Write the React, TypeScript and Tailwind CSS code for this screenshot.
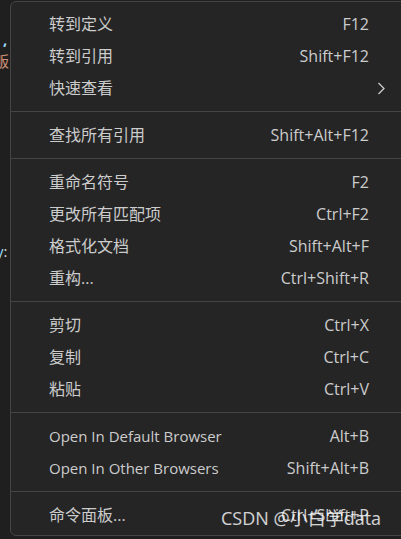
const sections = [
  [
    { label: "转到定义", key: "F12" },
    { label: "转到引用", key: "Shift+F12" },
    { label: "快速查看", key: "", sub: true },
  ],
  [{ label: "查找所有引用", key: "Shift+Alt+F12" }],
  [
    { label: "重命名符号", key: "F2" },
    { label: "更改所有匹配项", key: "Ctrl+F2" },
    { label: "格式化文档", key: "Shift+Alt+F" },
    { label: "重构...", key: "Ctrl+Shift+R" },
  ],
  [
    { label: "剪切", key: "Ctrl+X" },
    { label: "复制", key: "Ctrl+C" },
    { label: "粘贴", key: "Ctrl+V" },
  ],
  [
    { label: "Open In Default Browser", key: "Alt+B", latin: true },
    { label: "Open In Other Browsers", key: "Shift+Alt+B", latin: true },
  ],
  [{ label: "命令面板...", key: "Ctrl+Shift+P" }],
];

function Row({
  label,
  keyText,
  sub,
  latin,
}: {
  label: string;
  keyText: string;
  sub?: boolean;
  latin?: boolean;
}) {
  return (
    <div className="flex h-[32px] items-center pl-[38px] text-[#cccccc]">
      <span className={latin ? "flex-1 whitespace-nowrap text-[15px]" : "flex-1 whitespace-nowrap text-[16px]"}>
        {label}
      </span>
      <span className="whitespace-nowrap text-[16px]">{keyText}</span>
      <span className="flex w-[40px] shrink-0 items-center pl-[8px]">
        {sub && (
          <svg width="9" height="13" viewBox="0 0 9 13" fill="none">
            <path d="M1.5 1 L7 6.5 L1.5 12" stroke="#cccccc" strokeWidth="1.3" />
          </svg>
        )}
      </span>
    </div>
  );
}

export default function App() {
  return (
    <div
      className="relative flex h-[539px] w-[401px] overflow-hidden bg-[#1f1f1f]"
      style={{ fontFamily: '"Open Sans", "Noto Sans CJK SC", sans-serif' }}
    >
      {/* editor text peeking out behind the menu */}
      <div className="relative w-[10px] shrink-0 text-[15px]">
        <span className="absolute left-[3px] top-[28px] font-bold text-[#9cdcfe]">,</span>
        <span className="absolute left-[-6px] top-[50px] text-[#ce9178]">贩</span>
        <span className="absolute left-[-4px] top-[240px] text-[#9cdcfe]">
          y<span className="text-[#d4d4d4]">:</span>
        </span>
      </div>

      <div className="mt-[1px] mb-[3px] w-[400px] shrink-0 rounded-[6px] border border-[#454545] bg-[#252526] pt-[6px]">
        {sections.map((items, i) => (
          <div key={i}>
            {i > 0 && (
              <div className="flex h-[15px] items-center">
                <div className="h-px w-full bg-[#454545]" />
              </div>
            )}
            {items.map((it) => (
              <Row key={it.label} label={it.label} keyText={it.key} sub={it.sub} latin={it.latin} />
            ))}
          </div>
        ))}
      </div>

      <span className="absolute left-[221px] top-[505px] text-[18px] text-white/80">
        CSDN @小白学data
      </span>
    </div>
  );
}
